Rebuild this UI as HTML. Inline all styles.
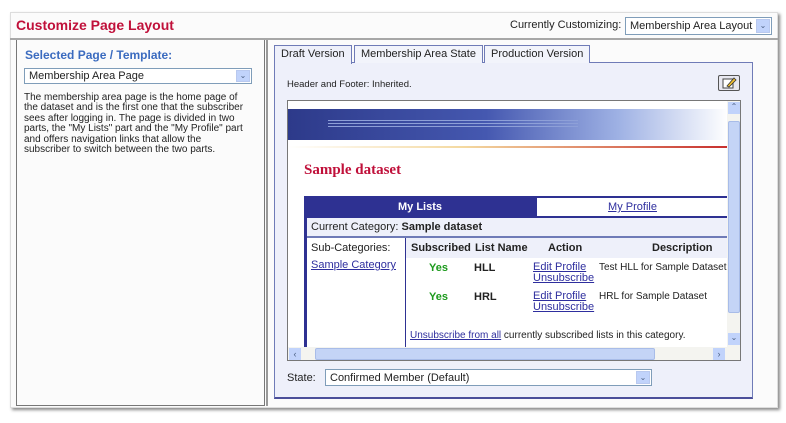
<!DOCTYPE html><html><head><style>
*{box-sizing:border-box;margin:0;padding:0}
body{width:786px;height:423px;background:#fff;font-family:"Liberation Sans",Verdana,sans-serif;font-size:11px;color:#222;position:relative;overflow:hidden}
.abs{position:absolute}
.sel{position:absolute;background:#fff;border:1px solid #7f9db9;font-size:11px;padding:1px 4px;line-height:14px}
.sel .ar{position:absolute;right:1px;top:1px;width:14px;bottom:1px;background:#c1d3fb;border:1px solid #b9c9ef;color:#4d6185;font-size:8px;text-align:center;line-height:12px}
a{color:#2e2e9e;text-decoration:underline}
.tab{position:absolute;top:45px;height:18px;border:1px solid #6f7bb7;border-bottom:none;background:#f2f4fb;font-size:11px;line-height:16px;padding:0 6px;color:#222}
</style></head><body>
<div class="abs" style="left:10px;top:12px;width:768px;height:396px;background:#fbfbfb;border:1px solid #ddd;box-shadow:2px 2px 3px #888"></div>
<div class="abs" style="left:16px;top:17px;font-size:14px;font-weight:bold;color:#c0103a">Customize Page Layout</div>
<div class="abs" style="left:510px;top:19px;font-size:11px">Currently Customizing:</div>
<div class="sel" style="left:625px;top:17px;width:147px;height:18px">Membership Area Layout<div class="ar">&#8964;</div></div>
<div class="abs" style="left:10px;top:38px;width:768px;height:2px;background:#a7a7a7"></div>
<div class="abs" style="left:16px;top:40px;width:249px;height:366px;border:1px solid #777;border-top:none;background:#fbfbfb"></div>
<div class="abs" style="left:266px;top:40px;width:2px;height:366px;background:#999"></div>
<div class="abs" style="left:25px;top:48px;font-size:12px;font-weight:bold;color:#3b6bbf">Selected Page / Template:</div>
<div class="sel" style="left:24px;top:68px;width:228px;height:16px;line-height:12px">Membership Area Page<div class="ar" style="line-height:10px">&#8964;</div></div>
<div class="abs" style="left:24px;top:93px;width:222px;font-size:10px;line-height:10.4px">The membership area page is the home page of the dataset and is the first one that the subscriber sees after logging in. The page is divided in two parts, the "My Lists" part and the "My Profile" part and offers navigation links that allow the subscriber to switch between the two parts.</div>
<div class="abs" style="left:274px;top:62px;width:479px;height:337px;background:#eef0fa;border:1px solid #6f7bb7;border-bottom:2px solid #4b4f9a"></div>
<div class="tab" style="left:274px;background:#eef0fa;height:19px">Draft Version</div>
<div class="tab" style="left:354px">Membership Area State</div>
<div class="tab" style="left:484px">Production Version</div>
<div class="abs" style="left:287px;top:79px;font-size:9.5px">Header and Footer: Inherited.</div>
<div class="abs" style="left:718px;top:75px;width:22px;height:16px;border:1px solid #555;border-radius:2px;background:#e8e8f0"><svg width="20" height="14" viewBox="0 0 20 14"><rect x="4" y="3" width="10" height="9" fill="#fff" stroke="#444"/><path d="M8 10 L15 2 L17 4 L10 11 Z" fill="#f0c030" stroke="#333" stroke-width=".8"/></svg></div>
<div class="abs" style="left:287px;top:100px;width:454px;height:261px;background:#fff;border:1px solid #777;overflow:hidden">
 <div class="abs" style="left:0;top:8px;width:440px;height:31px;background:linear-gradient(90deg,#2d3a8a 0%,#4558b0 45%,#9eb1e4 75%,#fff 100%)"></div>
 <div class="abs" style="left:40px;top:19px;width:250px;height:1px;background:#8ea0d8"></div>
 <div class="abs" style="left:40px;top:22px;width:250px;height:1px;background:#8ea0d8"></div>
 <div class="abs" style="left:40px;top:25px;width:250px;height:1px;background:#8ea0d8"></div>
 <div class="abs" style="left:0;top:45px;width:440px;height:2px;background:linear-gradient(90deg,#fff,#f4d9a0 40%,#c8302e)"></div>
 <div class="abs" style="left:16px;top:61px;font-family:'Liberation Serif',serif;font-size:15px;font-weight:bold;color:#c0103a">Sample dataset</div>
 <div class="abs" style="left:16px;top:95px;width:424px;height:22px;background:#2e3192"></div>
 <div class="abs" style="left:16px;top:100px;width:232px;text-align:center;color:#fff;font-weight:bold;font-size:11px">My Lists</div>
 <div class="abs" style="left:249px;top:97px;width:191px;height:18px;background:#fff;text-align:center;line-height:18px"><a>My Profile</a></div>
 <div class="abs" style="left:16px;top:117px;width:3px;height:150px;background:#2e3192"></div>
 <div class="abs" style="left:19px;top:117px;width:421px;height:20px;background:#eef0fa;border-bottom:2px solid #6f7bb7;font-size:11px;line-height:19px;padding-left:4px">Current Category: <b>Sample dataset</b></div>
 <div class="abs" style="left:23px;top:141px;font-size:11px">Sub-Categories:</div>
 <div class="abs" style="left:23px;top:158px;font-size:11px"><a>Sample Category</a></div>
 <div class="abs" style="left:117px;top:137px;width:1px;height:130px;background:#2e3192"></div>
 <div class="abs" style="left:118px;top:137px;width:322px;height:20px;background:#eef0fa"></div>
 <div class="abs" style="left:123px;top:141px;font-weight:bold;font-size:11px">Subscribed</div>
 <div class="abs" style="left:187px;top:141px;font-weight:bold;font-size:11px">List Name</div>
 <div class="abs" style="left:260px;top:141px;font-weight:bold;font-size:11px">Action</div>
 <div class="abs" style="left:364px;top:141px;font-weight:bold;font-size:11px">Description</div>
 <div class="abs" style="left:141px;top:161px;font-weight:bold;color:#1c9a1c">Yes</div>
 <div class="abs" style="left:186px;top:161px;font-weight:bold">HLL</div>
 <div class="abs" style="left:245px;top:161px;line-height:11px"><a>Edit Profile</a><br><a>Unsubscribe</a></div>
 <div class="abs" style="left:311px;top:161px;font-size:10px">Test HLL for Sample Dataset</div>
 <div class="abs" style="left:141px;top:190px;font-weight:bold;color:#1c9a1c">Yes</div>
 <div class="abs" style="left:186px;top:190px;font-weight:bold">HRL</div>
 <div class="abs" style="left:245px;top:190px;line-height:11px"><a>Edit Profile</a><br><a>Unsubscribe</a></div>
 <div class="abs" style="left:311px;top:190px;font-size:10px">HRL for Sample Dataset</div>
 <div class="abs" style="left:122px;top:229px;font-size:10px"><a>Unsubscribe from all</a> currently subscribed lists in this category.</div>
 <div class="abs" style="left:439px;top:0;width:14px;height:246px;background:#f4f4f0"></div>
 <div class="abs" style="left:440px;top:1px;width:12px;height:12px;background:#c1d3fb;font-size:8px;text-align:center;color:#4d6185">&#8963;</div>
 <div class="abs" style="left:440px;top:20px;width:12px;height:192px;background:#c4d4f6;border:1px solid #a8bce8;border-radius:2px"></div>
 <div class="abs" style="left:440px;top:232px;width:12px;height:12px;background:#c1d3fb;font-size:8px;text-align:center;color:#4d6185">&#8964;</div>
 <div class="abs" style="left:0;top:246px;width:453px;height:14px;background:#f4f4f0"></div>
 <div class="abs" style="left:1px;top:247px;width:12px;height:12px;background:#c1d3fb;font-size:9px;text-align:center;color:#4d6185;line-height:12px">&lsaquo;</div>
 <div class="abs" style="left:27px;top:247px;width:340px;height:12px;background:#c4d4f6;border:1px solid #a8bce8;border-radius:2px"></div>
 <div class="abs" style="left:425px;top:247px;width:12px;height:12px;background:#c1d3fb;font-size:9px;text-align:center;color:#4d6185;line-height:12px">&rsaquo;</div>
</div>
<div class="abs" style="left:287px;top:372px;font-size:11px">State:</div>
<div class="sel" style="left:325px;top:369px;width:327px;height:17px">Confirmed Member (Default)<div class="ar">&#8964;</div></div>
</body></html>
